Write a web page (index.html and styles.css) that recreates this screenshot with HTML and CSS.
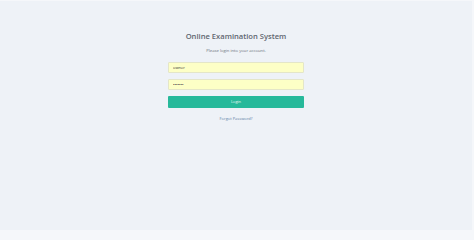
FILE: index.html
```html
<!DOCTYPE html>
<html>
<head>
<meta charset="utf-8">
<link rel="stylesheet" href="styles.css">
</head>
<body>
<div class="frame">
  <div class="login">
    <h1 class="title">Online Examination System</h1>
    <p class="subtitle">Please login into your account.</p>
    <form class="form">
      <input class="field" type="text" value="owner">
      <input class="field" type="password" value="owner12">
      <button class="btn" type="button">Login</button>
    </form>
    <a class="forgot" href="#">Forgot Password?</a>
  </div>
</div>
</body>
</html>
```
FILE: styles.css
```css
html, body {
  margin: 0;
  padding: 0;
  height: 100%;
}
body {
  background: #f5f7fa;
  font-family: "Open Sans", "Liberation Sans", sans-serif;
}
.frame {
  box-sizing: border-box;
  height: 229px;
  width: 472px;
  margin-top: 1px;
  background: #eef2f7;
  display: flex;
  justify-content: center;
}
.login {
  width: 136px;
  display: flex;
  flex-direction: column;
  align-items: center;
  padding-top: 30px;
}
.title {
  margin: 0;
  font-size: 7.6px;
  font-weight: 600;
  color: #5f6670;
  line-height: 11px;
}
.subtitle {
  margin: 6px 0 0;
  font-size: 4.2px;
  color: #6b717a;
  line-height: 6px;
}
.form {
  width: 100%;
  display: flex;
  flex-direction: column;
  gap: 6px;
  margin-top: 8px;
}
.field {
  box-sizing: border-box;
  width: 100%;
  height: 11px;
  margin: 0;
  padding: 0 4px;
  border: 0.5px solid #e4e6c8;
  border-radius: 1px;
  background: #fdffc6;
  font-family: "Open Sans", "Liberation Sans", sans-serif;
  font-size: 4px;
  color: #333;
  outline: none;
}
.btn {
  box-sizing: border-box;
  width: 100%;
  height: 11.5px;
  margin: 0;
  padding: 0;
  border: none;
  border-radius: 1px;
  background: #26b99a;
  color: #e8f7f3;
  font-family: "Open Sans", "Liberation Sans", sans-serif;
  font-size: 4px;
}
.forgot {
  margin-top: 8px;
  font-size: 4px;
  color: #5b7fa6;
  text-decoration: none;
}
```
